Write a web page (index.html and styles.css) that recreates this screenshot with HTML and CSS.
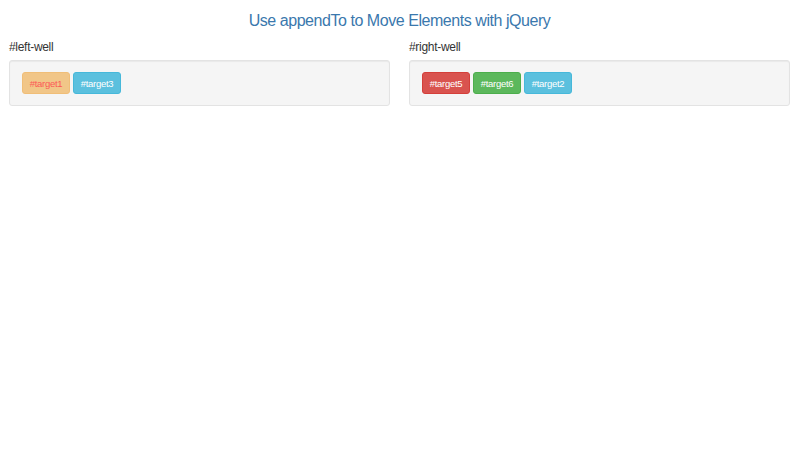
FILE: index.html
```html
<!DOCTYPE html>
<html>
<head>
    <meta charset="utf-8">
    <title>appendTo</title>
    <link rel="stylesheet" href="styles.css">
</head>
<body>
    <div class="container">
        <h3 class="title">Use appendTo to Move Elements with jQuery</h3>
        <div class="row">
            <div class="col">
                <h4>#left-well</h4>
                <div class="well" id="left-well">
                    <button class="btn btn-warning" id="target1" disabled>#target1</button>
                    <button class="btn btn-info" id="target3">#target3</button>
                </div>
            </div>
            <div class="col">
                <h4>#right-well</h4>
                <div class="well" id="right-well">
                    <button class="btn btn-danger" id="target5">#target5</button>
                    <button class="btn btn-success" id="target6">#target6</button>
                    <button class="btn btn-info" id="target2">#target2</button>
                </div>
            </div>
        </div>
    </div>
</body>
</html>
```

FILE: styles.css
```css
body {
    margin: 0;
    background-color: #fff;
    font-family: "Liberation Sans", Arial, sans-serif;
    color: #333;
}

.container {
    padding: 0 10px 0 9px;
}

.title {
    margin: 0;
    padding-top: 10px;
    height: 30px;
    line-height: 21px;
    text-align: center;
    font-size: 16px;
    letter-spacing: -0.45px;
    font-weight: normal;
    color: #3a78ad;
}

.row {
    display: grid;
    grid-template-columns: 1fr 1fr;
    column-gap: 19px;
}

.col h4 {
    margin: 0;
    height: 20px;
    line-height: 15px;
    font-size: 12px;
    letter-spacing: -0.3px;
    font-weight: normal;
    color: #333;
}

.well {
    display: flex;
    gap: 3px;
    padding: 11px 12px;
    min-height: 22px;
    background-color: #f5f5f5;
    border: 1px solid #e3e3e3;
    border-radius: 3px;
    box-shadow: inset 0 1px 1px rgba(0, 0, 0, 0.05);
}

.btn {
    width: 48px;
    height: 22px;
    padding: 0;
    font-family: inherit;
    font-size: 9.5px;
    letter-spacing: -0.3px;
    color: #fff;
    border: 1px solid transparent;
    border-radius: 3px;
}

.btn-warning {
    background-color: #f0ad4e;
    border-color: #eea236;
}

.btn-info {
    background-color: #5bc0de;
    border-color: #46b8da;
}

.btn-danger {
    background-color: #d9534f;
    border-color: #d43f3a;
}

.btn-success {
    background-color: #5cb85c;
    border-color: #4cae4c;
}

#target1 {
    color: red;
}

.btn[disabled] {
    opacity: 0.65;
}
```
